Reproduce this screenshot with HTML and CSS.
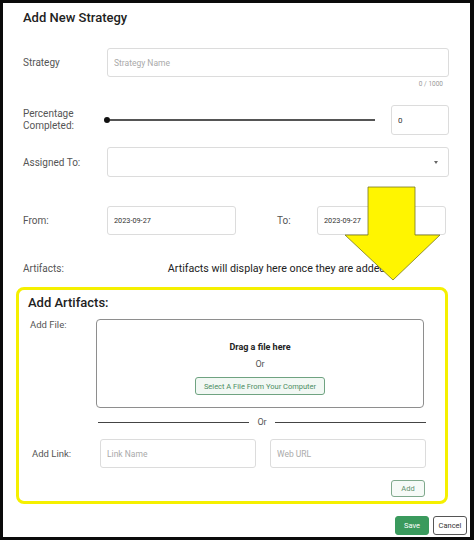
FILE: index.html
```html
<!DOCTYPE html>
<html lang="en">
<head>
    <meta charset="UTF-8">
    <meta name="viewport" content="width=device-width, initial-scale=1.0">
    <title>Add New Strategy</title>
    <link rel="stylesheet" href="styles.css">
</head>
<body>
    <div class="modal">
        <h1 class="modal-title">Add New Strategy</h1>

        <div class="row row-strategy">
            <label for="strategy">Strategy</label>
            <input type="text" id="strategy" class="field" placeholder="Strategy Name">
        </div>
        <div class="counter">0 / 1000</div>

        <div class="row row-percent">
            <label class="label-two">Percentage<br>Completed:</label>
            <div class="slider">
                <span class="slider-dot"></span>
                <span class="slider-track"></span>
            </div>
            <input type="text" class="field field-number" value="0">
        </div>

        <div class="row row-assigned">
            <label>Assigned To:</label>
            <div class="field select"><span class="caret"></span></div>
        </div>

        <div class="row row-dates">
            <label>From:</label>
            <input type="text" class="field field-date" value="2023-09-27">
            <label class="to-label">To:</label>
            <input type="text" class="field field-date" value="2023-09-27">
        </div>

        <div class="row row-artifacts">
            <label>Artifacts:</label>
            <div class="artifacts-empty">Artifacts will display here once they are added.</div>
        </div>

        <!-- Add Artifacts -->
        <div class="artifacts-box">
            <h2>Add Artifacts:</h2>
            <div class="file-row">
                <label>Add File:</label>
                <div class="dropzone">
                    <div class="drop-title">Drag a file here</div>
                    <div class="drop-or">Or</div>
                    <button class="btn-outline btn-select">Select A File From Your Computer</button>
                </div>
            </div>
            <div class="divider"><span>Or</span></div>
            <div class="link-row">
                <label>Add Link:</label>
                <input type="text" class="field field-link" placeholder="Link Name">
                <input type="text" class="field field-link" placeholder="Web URL">
            </div>
            <div class="add-row">
                <button class="btn-outline btn-add">Add</button>
            </div>
        </div>

        <div class="footer">
            <button class="btn-save">Save</button>
            <button class="btn-cancel">Cancel</button>
        </div>

        <svg class="arrow" width="98" height="96" viewBox="0 0 98 96">
            <polygon points="24,1 71,1 71,49 96,49 49,94 1,49 24,49" fill="#fff500" stroke="#77771e" stroke-width="0.8"/>
        </svg>
    </div>
</body>
</html>
```

FILE: styles.css
```css
body {
    margin: 0;
    padding: 3px 4px 3px 3px;
    background-color: #0b0b0b;
    font-family: Roboto, "Liberation Sans", Arial, sans-serif;
}
.modal {
    position: relative;
    height: 534px;
    box-sizing: border-box;
    padding: 7px 3px 3px 20px;
    background-color: #fff;
}
.modal-title {
    margin: 0;
    font-size: 13px;
    font-weight: 500;
    line-height: 16px;
    color: #222;
}
.row {
    display: flex;
    align-items: center;
    margin-right: 18px;
}
.row label {
    width: 84px;
    flex: none;
    font-size: 10px;
    color: #555;
}
.field {
    flex: 1;
    min-width: 0;
    height: 29px;
    box-sizing: border-box;
    padding: 0 6px;
    border: 1px solid #dcdcdc;
    border-radius: 3px;
    background-color: #fff;
    font-family: inherit;
    font-size: 8.5px;
    color: #333;
    outline: none;
}
.field::placeholder {
    color: #aaa;
}
.row-strategy {
    margin-top: 22px;
}
.counter {
    margin: 2px 24px 0 0;
    text-align: right;
    font-size: 6.5px;
    line-height: 10px;
    color: #999;
}
.row-percent {
    margin-top: 16px;
    height: 30px;
}
.row label.label-two {
    line-height: 12.5px;
}
.slider {
    flex: 1;
    display: flex;
    align-items: center;
    margin: 0 16px 0 -3px;
}
.slider-dot {
    width: 6px;
    height: 6px;
    border-radius: 50%;
    background-color: #111;
    flex: none;
}
.slider-track {
    flex: 1;
    height: 1.5px;
    background-color: #555;
}
.field-number {
    flex: none;
    width: 58px;
    height: 30px;
    font-size: 8px;
}
.row-assigned {
    margin-top: 12px;
}
.select {
    height: 30px;
    display: flex;
    align-items: center;
    justify-content: flex-end;
    padding-right: 10px;
}
.caret {
    width: 0;
    height: 0;
    border-left: 2.5px solid transparent;
    border-right: 2.5px solid transparent;
    border-top: 3px solid #666;
}
.row-dates {
    margin-top: 29px;
}
.field-date {
    flex: none;
    width: 129px;
    font-size: 7.3px;
}
.row label.to-label {
    width: 40px;
    margin-left: 41px;
}
.row-artifacts {
    margin-top: 27px;
    line-height: 14px;
}
.artifacts-empty {
    flex: 1;
    text-align: center;
    font-size: 10.7px;
    color: #222;
}
/* Add Artifacts box */
.artifacts-box {
    margin: 11px 19px 0 -7px;
    padding: 5px 0 4px 9px;
    border: 3px solid #f5f000;
    border-radius: 8px;
}
.artifacts-box h2 {
    margin: 0;
    font-size: 13px;
    font-weight: 500;
    line-height: 16px;
    color: #222;
}
.artifacts-box label {
    flex: none;
    font-size: 9.5px;
    color: #555;
}
.file-row {
    display: flex;
    align-items: flex-start;
    margin-top: 8px;
}
.file-row label {
    width: 66px;
    margin-left: 2px;
    line-height: 11px;
}
.dropzone {
    width: 328px;
    height: 89px;
    box-sizing: border-box;
    padding-top: 21px;
    border: 1px solid #8e8e8e;
    border-radius: 4px;
    display: flex;
    flex-direction: column;
    align-items: center;
}
.drop-title {
    font-size: 9px;
    font-weight: 700;
    line-height: 12px;
    color: #222;
}
.drop-or {
    margin-top: 5px;
    font-size: 9px;
    line-height: 12px;
    color: #555;
}
.btn-outline {
    box-sizing: border-box;
    border: 1px solid #6fa381;
    border-radius: 3px;
    background-color: #f2f8f4;
    font-family: inherit;
    font-size: 7.5px;
    color: #4b8d62;
    padding: 0;
    cursor: pointer;
}
.btn-select {
    margin-top: 7px;
    width: 130px;
    height: 18px;
}
.divider {
    display: flex;
    align-items: center;
    width: 328px;
    margin: 8px 0 0 70px;
    font-size: 9px;
    line-height: 12px;
    color: #555;
}
.divider::before,
.divider::after {
    content: "";
    flex: 1;
    height: 1px;
    background-color: #444;
}
.divider span {
    padding: 0 8px;
}
.link-row {
    display: flex;
    align-items: center;
    margin-top: 11px;
}
.link-row label {
    width: 68px;
    margin-left: 4px;
}
.field-link {
    flex: none;
    width: 156px;
}
.field-link + .field-link {
    margin-left: 14px;
}
.add-row {
    display: flex;
    justify-content: flex-end;
    margin: 12px 20px 0 0;
}
.btn-add {
    width: 34px;
    height: 17px;
    border-color: #7fa98c;
    background-color: #f6faf7;
    color: #5e8f6d;
}
.footer {
    display: flex;
    justify-content: flex-end;
    gap: 4px;
    margin-top: 12px;
}
.footer button {
    width: 34px;
    height: 19px;
    padding: 0;
    border-radius: 3px;
    font-family: inherit;
    font-size: 7.5px;
    cursor: pointer;
}
.btn-save {
    border: 1px solid #3a9a5d;
    background-color: #3a9a5d;
    color: #fff;
}
.btn-cancel {
    border: 1px solid #555;
    background-color: #fff;
    color: #333;
}
.arrow {
    position: absolute;
    left: 341px;
    top: 183px;
    pointer-events: none;
}
```
